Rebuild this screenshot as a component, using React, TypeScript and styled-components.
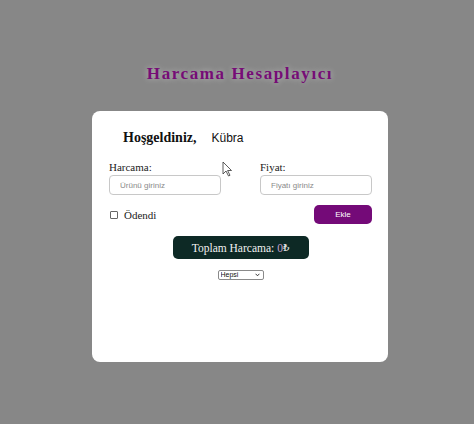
import React from 'react'
import styled, { createGlobalStyle } from 'styled-components'

const GlobalStyle = createGlobalStyle`
    html, body {
        margin: 0;
        padding: 0;
        background: #878787;
    }
    body {
        font-family: "Liberation Serif", serif;
    }
`

const Page = styled.div`
    width: 474px;
    height: 424px;
    box-sizing: border-box;
    padding-left: 6px;
    display: flex;
    flex-direction: column;
    align-items: center;
    position: relative;
    overflow: hidden;
`

const Title = styled.h1`
    margin: 63px 0 0 0;
    font-family: "Liberation Serif", serif;
    font-size: 17px;
    line-height: 22px;
    font-weight: 700;
    letter-spacing: 1.6px;
    color: #760c76;
    text-shadow: 0 0 6px rgba(255,255,255,0.45);
`

const Card = styled.div`
    margin-top: 26px;
    width: 296px;
    height: 251px;
    box-sizing: border-box;
    background: #fff;
    border-radius: 8px;
    padding: 19px 16px 0 17px;
    display: flex;
    flex-direction: column;
`

const Welcome = styled.div`
    display: flex;
    align-items: baseline;
    gap: 15px;
    padding-left: 14px;
    height: 22px;
`

const WelcomeText = styled.h2`
    margin: 0;
    font-size: 14px;
    font-weight: 700;
    color: #111;
`

const Name = styled.span`
    font-family: "Liberation Sans", sans-serif;
    font-size: 12px;
    color: #111;
`

const Fields = styled.div`
    display: grid;
    grid-template-columns: 112px 112px;
    justify-content: space-between;
    margin-top: 9px;
`

const Field = styled.label`
    display: flex;
    flex-direction: column;
    gap: 2px;
    font-size: 11px;
    color: #222;
`

const Input = styled.input`
    box-sizing: border-box;
    width: 112px;
    height: 20px;
    border: 1px solid #c8c8c8;
    border-radius: 4px;
    padding: 0 10px;
    font-family: "Liberation Sans", sans-serif;
    font-size: 8px;
    outline: none;
    &::placeholder {
        color: #8a8a8a;
    }
`

const Actions = styled.div`
    display: flex;
    justify-content: space-between;
    align-items: center;
    margin-top: 10px;
`

const Check = styled.label`
    display: flex;
    align-items: center;
    gap: 6px;
    font-size: 11px;
    color: #222;
    padding-left: 1px;
`

const Box = styled.span`
    width: 6px;
    height: 6px;
    border: 1px solid #666;
    border-radius: 1px;
`

const AddButton = styled.button`
    width: 58px;
    height: 19px;
    border: none;
    border-radius: 5px;
    background: #740a78;
    color: #fff;
    font-family: "Liberation Sans", sans-serif;
    font-size: 8px;
    cursor: pointer;
`

const Total = styled.div`
    align-self: center;
    margin-top: 12px;
    width: 136px;
    height: 23px;
    border-radius: 5px;
    background: #0d2925;
    color: #f2f2f2;
    font-size: 11.5px;
    display: flex;
    align-items: center;
    justify-content: center;
`

const Amount = styled.span`
    color: #c8a0cc;
`

const Lira = styled.span`
    font-family: "DejaVu Serif", serif;
    font-size: 10px;
`

const FilterWrap = styled.div`
    align-self: center;
    margin-top: 11px;
    position: relative;
    width: 46px;
    height: 10px;
`

const Filter = styled.select`
    appearance: none;
    box-sizing: border-box;
    width: 46px;
    height: 10px;
    padding: 0 0 0 2px;
    display: block;
    font-family: "Liberation Sans", sans-serif;
    font-size: 7px;
    line-height: 8px;
    border: 1px solid #8a8a8a;
    border-radius: 2px;
    background: #fff;
    color: #111;
`

const Chevron = styled.svg`
    position: absolute;
    right: 4px;
    top: 3px;
    pointer-events: none;
`

const Cursor = styled.svg`
    position: absolute;
    left: 222px;
    top: 161px;
`

const App = () => {
    return (
        <>
            <GlobalStyle />
            <Page>
                <Title>Harcama Hesaplayıcı</Title>
                <Card>
                    <Welcome>
                        <WelcomeText>Hoşgeldiniz,</WelcomeText>
                        <Name>Kübra</Name>
                    </Welcome>
                    <Fields>
                        <Field>
                            Harcama:
                            <Input placeholder="Ürünü giriniz" />
                        </Field>
                        <Field>
                            Fiyat:
                            <Input placeholder="Fiyatı giriniz" />
                        </Field>
                    </Fields>
                    <Actions>
                        <Check>
                            <Box />
                            Ödendi
                        </Check>
                        <AddButton>Ekle</AddButton>
                    </Actions>
                    <Total>
                        Toplam Harcama:&nbsp;<Amount>0</Amount><Lira>₺</Lira>
                    </Total>
                    <FilterWrap>
                        <Filter defaultValue="hepsi">
                            <option value="hepsi">Hepsi</option>
                        </Filter>
                        <Chevron width="5" height="4" viewBox="0 0 5 4">
                            <path d="M0.6 0.8 L2.5 2.8 L4.4 0.8" fill="none" stroke="#222" strokeWidth="0.9" />
                        </Chevron>
                    </FilterWrap>
                </Card>
                <Cursor width="11" height="16" viewBox="0 0 11 16">
                    <path d="M1 1 L1 13 L4 10 L6.5 15 L8 14.3 L5.6 9.5 L9.5 9.5 Z" fill="#fff" stroke="#333" strokeWidth="0.8" strokeLinejoin="round" />
                </Cursor>
            </Page>
        </>
    )
}

export default App
